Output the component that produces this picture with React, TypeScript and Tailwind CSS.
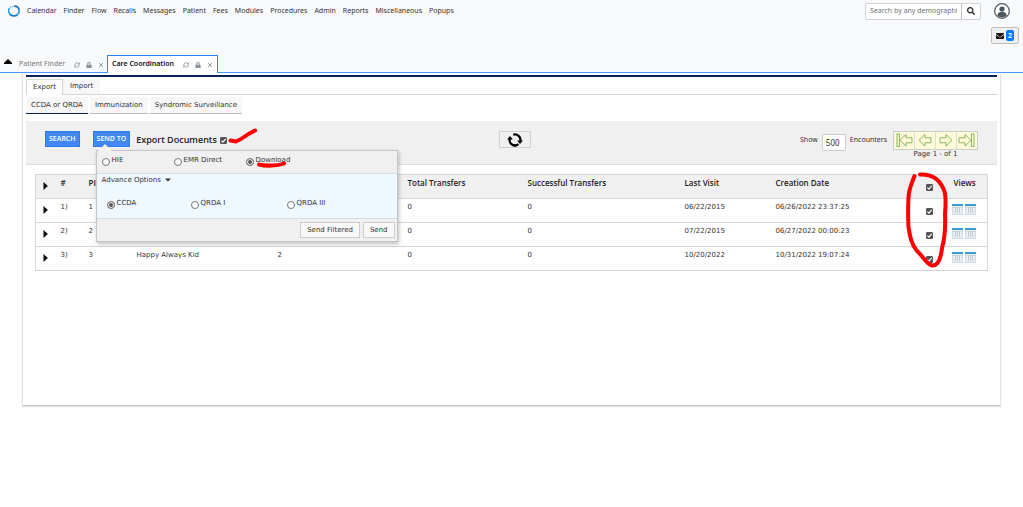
import { useState } from 'react';
import { FaSearch, FaEnvelope, FaLock } from 'react-icons/fa';

const menu = [
  'Calendar', 'Finder', 'Flow', 'Recalls', 'Messages', 'Patient', 'Fees', 'Modules',
  'Procedures', 'Admin', 'Reports', 'Miscellaneous', 'Popups',
];

const columns = [
  { label: '', width: 'w-[25px]' },
  { label: '#', width: 'w-[28px]' },
  { label: 'PID', width: 'w-[48px]' },
  { label: '', width: 'w-[141px]' },
  { label: '', width: 'w-[130px]' },
  { label: 'Total Transfers', width: 'w-[120px]' },
  { label: 'Successful Transfers', width: 'w-[157px]' },
  { label: 'Last Visit', width: 'w-[91px]' },
  { label: 'Creation Date', width: 'w-[150px]' },
];

const rows = [
  { pid: 1, name: '', encounter: '', last: '06/22/2015', created: '06/26/2022 23:37:25' },
  { pid: 2, name: '', encounter: '', last: '07/22/2015', created: '06/27/2022 00:00:23' },
  { pid: 3, name: 'Happy Always Kid', encounter: '2', last: '10/20/2022', created: '10/31/2022 19:07:24' },
];

const checkClass =
  'block size-[7px] shrink-0 appearance-none rounded-[1px] border border-[#555] bg-white checked:bg-[#555] col-start-1 row-start-1';

function Check({ label }: { label: string }) {
  const [on, setOn] = useState(true);
  return (
    <span className="inline-grid size-[7px] align-top">
      <input type="checkbox" aria-label={label} checked={on} onChange={() => setOn(!on)} className={checkClass} />
      {on && (
        <svg viewBox="0 0 7 7" className="pointer-events-none col-start-1 row-start-1 size-[7px]">
          <path d="M1.4 3.6 L2.9 5.1 L5.7 1.8" fill="none" stroke="#fff" strokeWidth="1.1" />
        </svg>
      )}
    </span>
  );
}

function Radio({ name, label, on, pick, className }: {
  name: string; label: string; on: boolean; pick: () => void; className: string;
}) {
  return (
    <label className={`flex items-start gap-[2px] ${className}`}>
      <input
        type="radio"
        name={name}
        checked={on}
        onChange={pick}
        className="mt-[3px] size-2 shrink-0 appearance-none rounded-full border border-[#777] bg-white checked:bg-[#555] checked:shadow-[inset_0_0_0_1px_#fff]"
      />
      <span className="leading-[10px]">{label}</span>
    </label>
  );
}

/* Two chasing arrows */
function Sync({ className }: { className: string }) {
  return (
    <svg viewBox="0 0 16 16" className={className} fill="none" stroke="currentColor" strokeWidth="2.2">
      <path d="M2 8 A6 6 0 0 1 12.4 4" />
      <path d="M14 8 A6 6 0 0 1 3.6 12" />
      <path d="M15.4 0.8 V6.8 H9.4 Z" fill="currentColor" stroke="none" />
      <path d="M0.6 15.2 V9.2 H6.6 Z" fill="currentColor" stroke="none" />
    </svg>
  );
}

function Refresh() {
  return (
    <svg viewBox="0 0 16 16" className="size-4" fill="none" stroke="#000" strokeWidth="2.2">
      <path d="M6.2 2.8 A5.4 5.4 0 0 1 13.3 9" />
      <path d="M11.6 12.2 A5.4 5.4 0 0 1 7 13.2" />
      <path d="M9.8 13.2 A5.4 5.4 0 0 1 2.8 6.8" />
      <path d="M10.2 8.4 H16 L13 12 Z" fill="#000" stroke="none" />
      <path d="M0 7.6 H5.8 L3 4 Z" fill="#000" stroke="none" />
    </svg>
  );
}

function Logo() {
  return (
    <svg viewBox="0 0 12 12" className="size-3" fill="none" strokeWidth="1.7">
      <path d="M1.2 3.4 A5 5 0 0 0 3.4 10.2" stroke="#2a9fd0" />
      <path d="M2.6 9.6 A4.8 4.8 0 0 0 9.4 9.6" stroke="#1b75bb" />
      <path d="M8.6 10 A5 5 0 0 0 10.6 3.8" stroke="#37a1dd" />
      <path d="M11.1 4.8 A4.8 4.8 0 0 0 6 1.2" stroke="#1b75bb" />
      <path d="M5.2 1.2 A5 5 0 0 0 1.2 3.6" stroke="#64c4e8" strokeWidth="1.1" />
    </svg>
  );
}

function Arrow({ flip, bar }: { flip?: boolean; bar?: boolean }) {
  return (
    <svg viewBox="0 0 20 17" className="h-[17px] w-5" fill="none" stroke="#7cae5a" strokeWidth="0.9">
      <g transform={flip ? 'translate(20 0) scale(-1 1)' : undefined}>
        {bar && <rect x="3" y="2" width="2.4" height="12.5" />}
        <path d={bar
          ? 'M6 8.3 L12 2.5 V5.8 H18 V10.8 H12 V14.1 Z'
          : 'M4 8.3 L10 2.5 V5.8 H16 V10.8 H10 V14.1 Z'}
        />
      </g>
    </svg>
  );
}

function GridIcon() {
  return (
    <svg viewBox="0 0 11 11" className="size-[11px]">
      <rect width="11" height="11" fill="#c9dcea" />
      <rect width="11" height="2" fill="#3a9bd9" />
      <rect x="1" y="2" width="9" height="8" fill="#eceeef" />
      <path d="M1.5 3.5 H9.5" stroke="#cfd4d7" />
      <path d="M3.5 3 V9 M5.5 3 V9 M7.5 3 V9" stroke="#c2c7ca" strokeWidth="0.9" />
    </svg>
  );
}

function Caret() {
  return (
    <svg viewBox="0 0 5 8" className="ml-[7px] h-2 w-[5px]">
      <path d="M0.5 0 L4.8 4 L0.5 8 Z" fill="#000" />
    </svg>
  );
}

function WindowTab({ title, active }: { title: string; active?: boolean }) {
  return (
    <div className={active
      ? 'flex h-[18px] items-center gap-[6px] border border-b-0 border-[#2684ee] bg-white px-1 font-semibold text-[#111]'
      : 'flex h-[18px] items-center gap-[6px] px-[3px] pt-px text-[#777]'}
    >
      <a href="#" className="mr-[3px]">{title}</a>
      <button aria-label={`Refresh ${title}`} className="text-[#8b9299]"><Sync className="size-[6px]" /></button>
      <button aria-label={`Lock ${title}`} className="text-[#8b9299]"><FaLock className="size-[6px]" /></button>
      <button aria-label={`Close ${title}`} className="text-[#8b9299]">
        <svg viewBox="0 0 6 6" className="size-[6px]"><path d="M1 1 L5 5 M5 1 L1 5" stroke="currentColor" strokeWidth="0.9" /></svg>
      </button>
    </div>
  );
}

/* Popover under the SEND TO button */
function SendPanel() {
  const [target, setTarget] = useState('Download');
  const [format, setFormat] = useState('CCDA');
  const button = 'h-4 border border-[#ccc] bg-[#f8f8f8] px-[6px] leading-[14px] text-[#333]';

  return (
    <div className="absolute top-[19px] left-[3px] z-10 w-[302px] border border-[#c6c6c6] bg-[#f0f0f0] shadow-[1px_2px_4px_rgba(0,0,0,0.25)]">
      <svg viewBox="0 0 14 7" className="absolute -top-[7px] left-px h-[7px] w-[14px]">
        <path d="M0 7 L7 0 L14 7 Z" fill="#f4f4f4" />
      </svg>
      <div className="flex h-[22px] pt-1 pl-[5px]">
        <Radio name="target" label="HIE" on={target === 'HIE'} pick={() => setTarget('HIE')} className="w-[72px]" />
        <Radio name="target" label="EMR Direct" on={target === 'EMR Direct'} pick={() => setTarget('EMR Direct')} className="w-[72px]" />
        <Radio name="target" label="Download" on={target === 'Download'} pick={() => setTarget('Download')} className="w-[72px]" />
      </div>
      <div className="h-[46px] border-y border-[#d5dce2] bg-[#eff7ff]">
        <button className="ml-[5px] flex h-3 items-center gap-1">
          Advance Options
          <svg viewBox="0 0 6 4" className="h-1 w-[6px]"><path d="M0 0.5 H6 L3 3.5 Z" fill="#333" /></svg>
        </button>
        <div className="mt-3 flex pl-[10px]">
          <Radio name="format" label="CCDA" on={format === 'CCDA'} pick={() => setFormat('CCDA')} className="w-[84px]" />
          <Radio name="format" label="QRDA I" on={format === 'QRDA I'} pick={() => setFormat('QRDA I')} className="w-[96px]" />
          <Radio name="format" label="QRDA III" on={format === 'QRDA III'} pick={() => setFormat('QRDA III')} className="w-[72px]" />
        </div>
      </div>
      <div className="flex h-[22px] items-center justify-end gap-[3px] px-[2px]">
        <button className={button}>Send Filtered</button>
        <button className={button}>Send</button>
      </div>
    </div>
  );
}

export default function App() {
  const [query, setQuery] = useState('');
  const [limit, setLimit] = useState('500');
  const blue = 'h-4 border border-[#3079ed] bg-[#4387f5] px-[3px] text-[7px] font-semibold text-white font-["Open_Sans",sans-serif]';

  return (
    <div className="relative min-h-screen bg-white font-['DejaVu_Sans',sans-serif] text-[7px] text-[#333]">
      <header className="flex h-[73px] flex-col border-b border-[#3f9bf5] bg-[#f8f9fb] font-['Noto_Sans',sans-serif] text-[7px]">
        <div className="flex h-[22px] items-center pr-[13px] pl-2">
          <Logo />
          <nav className="ml-[7px] flex flex-1 gap-[7px]">
            {menu.map(item => <a key={item} href="#">{item}</a>)}
          </nav>
          <form className="mr-[13px] flex h-[17px] rounded-[2px] border border-[#ced4da] bg-white">
            <input
              value={query}
              onChange={e => setQuery(e.target.value)}
              aria-label="Search by any demographics"
              placeholder="Search by any demographics"
              className="w-[95px] px-1 outline-none placeholder:text-[#6c757d]"
            />
            <button type="button" aria-label="Search" className="flex w-[19px] items-center justify-center border-l border-[#bbb] text-[#222]">
              <FaSearch className="size-2" />
            </button>
          </form>
          <button aria-label="User">
            <svg viewBox="0 0 16 16" className="size-4">
              <circle cx="8" cy="8" r="7.3" fill="#fff" stroke="#4d5561" strokeWidth="1.2" />
              <circle cx="8" cy="6" r="2.6" fill="#4d5561" />
              <path d="M3.2 12.2 C4 9.4 5.6 9 8 9 C10.4 9 12 9.4 12.8 12.2 C11.5 13.6 9.8 14.2 8 14.2 C6.2 14.2 4.5 13.6 3.2 12.2 Z" fill="#4d5561" />
            </svg>
          </button>
        </div>
        <div className="mt-[5px] flex justify-end pr-1">
          <button aria-label="Messages" className="flex h-[17px] items-center gap-[2px] rounded-[2px] border border-[#bfbfbf] bg-[#efefef] px-1">
            <FaEnvelope className="size-2 text-[#111]" />
            <span className="h-[11px] rounded-[2px] bg-[#007bff] px-[2px] leading-[11px] font-bold text-white">2</span>
          </button>
        </div>
        <div className="-mb-px mt-auto flex items-end pl-1">
          <svg viewBox="0 0 8 5" className="mb-[9px] h-[5px] w-2"><path d="M0 5 V4 L4 0 L8 4 V5 Z" fill="#000" /></svg>
          <div className="ml-1 flex">
            <WindowTab title="Patient Finder" />
            <WindowTab title="Care Coordination" active />
          </div>
        </div>
      </header>

      <main className="mx-[22px] mt-px min-h-[332px] border-x border-b border-x-[#e3e3e3] border-b-[#ccc] px-[3px] pt-px shadow-[0_1px_1px_#ddd]">
        <div className="h-[2px] bg-[#0b2158]" />
        <div className="mt-[2px] flex h-4 border-b border-[#d5d5d5]">
          <a href="#" className="-mb-px flex items-center border border-b-0 border-[#d5d5d5] bg-white px-[6px]">Export</a>
          <a href="#" className="flex items-center bg-[#f7f7f7] px-[7px]">Import</a>
        </div>
        <div className="mt-[2px] flex h-[17px] gap-[2px]">
          <a href="#" className="flex items-center border-b border-[#0b2158] bg-[#f7f7f7] px-[5px]">CCDA or QRDA</a>
          <a href="#" className="flex items-center border-b border-[#bbb] bg-[#f7f7f7] px-[5px]">Immunization</a>
          <a href="#" className="flex items-center border-b border-[#bbb] bg-[#f7f7f7] px-[5px]">Syndromic Surveillance</a>
        </div>

        {/* Toolbar */}
        <div className="mt-[7px] flex h-[44px] items-start border-b border-[#ddd] bg-[#f0f0f0] pt-[10px] pr-[19px] pl-[19px]">
          <button className={blue}>SEARCH</button>
          <div className="relative ml-[13px]">
            <button className={blue}>SEND TO</button>
            <SendPanel />
          </div>
          <div className="ml-[6px] flex h-[18px] items-center gap-[3px] font-['Open_Sans',sans-serif] text-[9px] font-semibold text-[#222]">
            <span>Export Documents</span>
            <Check label="Export Documents" />
          </div>
          <div className="flex flex-1 justify-center">
            <button aria-label="Refresh" className="ml-1 flex h-[17px] w-8 items-center justify-center border border-[#d0d0d0]">
              <Refresh />
            </button>
          </div>
          <label htmlFor="limit" className="pt-1 font-['Noto_Sans',sans-serif]">Show</label>
          <input
            id="limit"
            value={limit}
            onChange={e => setLimit(e.target.value)}
            className="mt-[3px] ml-1 h-[17px] w-6 rounded-[2px] border border-[#ccc] bg-white px-[3px] font-['Noto_Sans',sans-serif] text-[8px]"
          />
          <span className="ml-1 pt-1 font-['Noto_Sans',sans-serif]">Encounters</span>
          <div className="ml-[6px] text-center">
            <div className="flex divide-x divide-[#ddd] border border-[#ccc] bg-[#fffbd8]">
              <button aria-label="First page"><Arrow bar /></button>
              <button aria-label="Previous page"><Arrow /></button>
              <button aria-label="Next page"><Arrow flip /></button>
              <button aria-label="Last page"><Arrow flip bar /></button>
            </div>
            <p className="leading-[8px]">Page 1 - of 1</p>
          </div>
        </div>

        {/* Encounter list */}
        <div className="mt-[9px] pr-[13px] pl-[9px]">
          <table className="w-full table-fixed border-collapse border border-[#d5d5d5] text-left">
            <thead>
              <tr className="h-6 bg-[#f0f0f0] align-top font-['Open_Sans',sans-serif] text-[8px]">
                {columns.map((c, i) => (
                  <th key={i} className={`${c.width} pt-[3px] leading-[10px] font-semibold text-[#222]`}>
                    {i === 0 ? <div className="pt-1"><Caret /></div> : c.label}
                  </th>
                ))}
                <th className="w-[26px] pt-[9px] leading-[7px]"><Check label="Select all" /></th>
                <th className="w-[36px] pt-[3px] pl-[2px] leading-[10px] font-semibold text-[#222]">Views</th>
              </tr>
            </thead>
            <tbody>
              {rows.map(row => (
                <tr key={row.pid} className="h-6 border-t border-[#d5d5d5] align-top leading-[10px]">
                  <td className="pt-[7px]"><Caret /></td>
                  <td className="pt-[3px]">{row.pid})</td>
                  <td className="pt-[3px]">{row.pid}</td>
                  <td className="pt-[3px]">{row.name}</td>
                  <td className="pt-[3px]">{row.encounter}</td>
                  <td className="pt-[3px]">0</td>
                  <td className="pt-[3px]">0</td>
                  <td className="pt-[3px]">{row.last}</td>
                  <td className="pt-[3px]">{row.created}</td>
                  <td className="pt-[9px] leading-[7px]"><Check label={`Select row ${row.pid}`} /></td>
                  <td className="pt-[5px]">
                    <div className="flex gap-[2px]">
                      <button aria-label="View document"><GridIcon /></button>
                      <button aria-label="View log"><GridIcon /></button>
                    </div>
                  </td>
                </tr>
              ))}
            </tbody>
          </table>
        </div>
      </main>

      {/* Red pen marks */}
      <svg viewBox="0 0 64 40" className="pointer-events-none absolute top-[128px] left-[226px] z-20 h-10 w-16" fill="none" stroke="#fe0000" strokeWidth="4" strokeLinecap="round" strokeLinejoin="round">
        <path d="M4.500 12.5 L10 13.5 Q14 12 18 9 Q22 6 29 2.5" />
        <path d="M33 36.5 Q39 38 46 37.5 Q53 37.5 58 35.5" />
      </svg>
      <svg viewBox="0 0 44 98" className="pointer-events-none absolute top-[171px] right-[73px] z-20 h-[98px] w-11" fill="none" stroke="#fe0000" strokeWidth="4" strokeLinecap="round" strokeLinejoin="round">
        <path d="M8.5 5 C5 14 2.5 19 2.5 27 C2 37 2 47 2.5 56 C4 65 5 73 11 80 C17 85 20 93 26 94.5 C33 95 35 86 36 77 C39 67 39.5 55 39 43 C40 31 40 21 37 17 C33 8 25 3 14 3.5" />
      </svg>
    </div>
  );
}
